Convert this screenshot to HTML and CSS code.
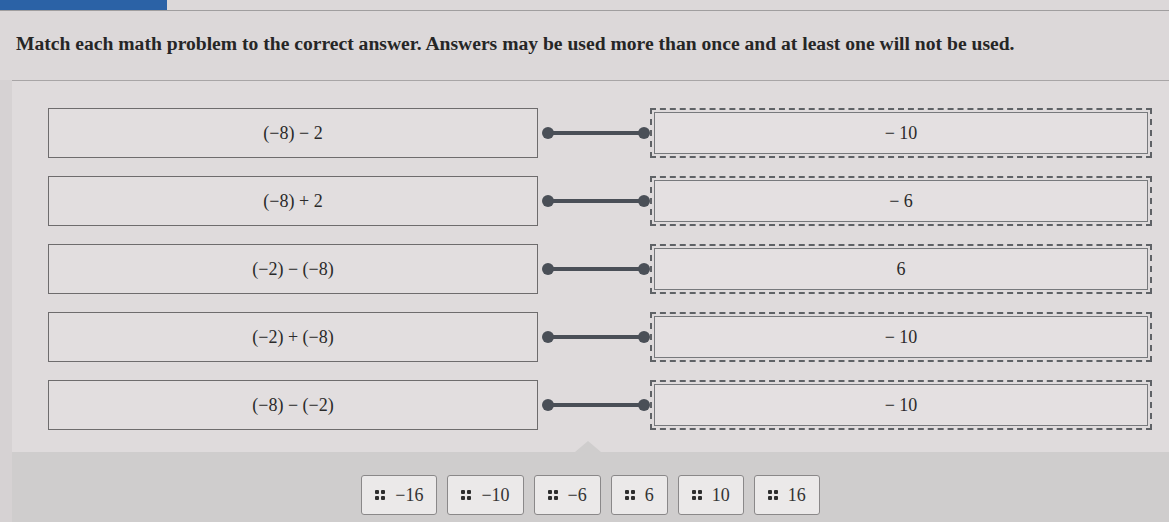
FILE: index.html
```html
<!DOCTYPE html>
<html lang="en">
  <head>
    <meta charset="UTF-8" />
    <meta name="viewport" content="width=device-width, initial-scale=1.0" />
    <title>Matching</title>
    <link rel="stylesheet" href="styles.css">
  </head>
  <body>
    <!-- Progress strip -->
    <div class="progress"><span class="progress-fill"></span></div>

    <p class="prompt">Match each math problem to the correct answer. Answers may be used more than once and at least one will not be used.</p>

    <div class="board">
      <!-- Problem / answer pairs -->
      <div class="pairs">
        <div class="pair">
          <div class="problem">(−8) − 2</div>
          <div class="link"><span class="dot"></span><span class="bar"></span><span class="dot"></span></div>
          <div class="slot"><div class="answer">− 10</div></div>
        </div>
        <div class="pair">
          <div class="problem">(−8) + 2</div>
          <div class="link"><span class="dot"></span><span class="bar"></span><span class="dot"></span></div>
          <div class="slot"><div class="answer">− 6</div></div>
        </div>
        <div class="pair">
          <div class="problem">(−2) − (−8)</div>
          <div class="link"><span class="dot"></span><span class="bar"></span><span class="dot"></span></div>
          <div class="slot"><div class="answer">6</div></div>
        </div>
        <div class="pair">
          <div class="problem">(−2) + (−8)</div>
          <div class="link"><span class="dot"></span><span class="bar"></span><span class="dot"></span></div>
          <div class="slot"><div class="answer">− 10</div></div>
        </div>
        <div class="pair">
          <div class="problem">(−8) − (−2)</div>
          <div class="link"><span class="dot"></span><span class="bar"></span><span class="dot"></span></div>
          <div class="slot"><div class="answer">− 10</div></div>
        </div>
      </div>

      <!-- Answer bank -->
      <div class="tray">
        <div class="chip"><span class="grip"><i></i><i></i><i></i><i></i></span>−16</div>
        <div class="chip"><span class="grip"><i></i><i></i><i></i><i></i></span>−10</div>
        <div class="chip"><span class="grip"><i></i><i></i><i></i><i></i></span>−6</div>
        <div class="chip"><span class="grip"><i></i><i></i><i></i><i></i></span>6</div>
        <div class="chip"><span class="grip"><i></i><i></i><i></i><i></i></span>10</div>
        <div class="chip"><span class="grip"><i></i><i></i><i></i><i></i></span>16</div>
      </div>
    </div>
  </body>
</html>
```

FILE: styles.css
```css
/* Page */
body {
  margin: 0;
  background: #d6d2d3;
  font-family: "Liberation Serif", "Times New Roman", serif;
  color: #2a2a2a;
}

/* Progress strip */
.progress {
  height: 10px;
  background: #dcd8d9;
  border-bottom: 1px solid #a09e9f;
}
.progress-fill {
  display: block;
  width: 167px;
  height: 10px;
  background: #2b62a6;
}

/* Question prompt */
.prompt {
  margin: 0;
  padding: 21px 0 24px 16px;
  background: #dcd8d9;
  font-size: 19.6px;
  font-weight: bold;
  line-height: 24px;
  color: #262626;
}

/* Board */
.board {
  margin-left: 12px;
  background: #dfdbdc;
  border-top: 1px solid #a8a5a6;
}
.pairs {
  display: flex;
  flex-direction: column;
  gap: 18px;
  padding: 27px 0 22px 36px;
}
.pair {
  display: grid;
  grid-template-columns: 490px 112px 502px;
  align-items: center;
  height: 50px;
}
.problem {
  height: 50px;
  box-sizing: border-box;
  display: flex;
  align-items: center;
  justify-content: center;
  border: 1px solid #6e6c6d;
  background: #e2dedf;
  font-size: 18px;
}

/* Connector between a problem and its answer */
.link {
  display: flex;
  align-items: center;
  padding-left: 4px;
}
.dot {
  width: 12px;
  height: 12px;
  border-radius: 50%;
  background: #4a4f57;
  flex: none;
}
.bar {
  flex: 1;
  height: 4px;
  margin: 0 -2px;
  background: #4a4f57;
}

/* Answer drop slot */
.slot {
  height: 50px;
  box-sizing: border-box;
  padding: 2px;
  border: 2px dashed #5f6266;
}
.answer {
  height: 100%;
  box-sizing: border-box;
  display: flex;
  align-items: center;
  justify-content: center;
  border: 1px solid #77797c;
  background: #e4e0e1;
  font-size: 18px;
}

/* Answer bank */
.tray {
  position: relative;
  display: flex;
  justify-content: center;
  gap: 10px;
  padding: 23px 0 7px;
  background: #cfcdcd;
}
.tray::before {
  content: "";
  position: absolute;
  top: -11px;
  left: 50%;
  margin-left: -16px;
  border-left: 13px solid transparent;
  border-right: 13px solid transparent;
  border-bottom: 11px solid #cfcdcd;
}
.chip {
  display: flex;
  align-items: center;
  gap: 10px;
  height: 40px;
  box-sizing: border-box;
  padding: 0 13px;
  border: 1px solid #8a8889;
  border-radius: 3px;
  background: #ebe9e9;
  font-size: 18px;
  color: #333;
}
.grip {
  display: grid;
  grid-template-columns: 4px 4px;
  gap: 2px;
}
.grip i {
  width: 4px;
  height: 4px;
  border-radius: 1px;
  background: #2e2e2e;
}
```
